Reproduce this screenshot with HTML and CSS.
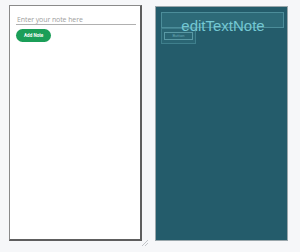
FILE: index.html
```html
<!DOCTYPE html>
<html>
<head>
<meta charset="utf-8">
<link rel="stylesheet" href="styles.css">
</head>
<body>
<div class="stage">
  <div class="design">
    <div class="edit">Enter your note here</div>
    <div class="btn">Add Note</div>
  </div>
  <div class="blueprint">
    <div class="bp-edit"><span class="bp-label">editTextNote</span></div>
    <div class="bp-btn"><div class="bp-btn-inner">Button</div></div>
  </div>
  <div class="grip">
    <svg width="8" height="8" viewBox="0 0 8 8"><path d="M7 1L1 7M7 4L4 7" stroke="#b5b8bd" stroke-width="0.8" fill="none"/></svg>
  </div>
</div>
</body>
</html>
```
FILE: styles.css
```css
html, body { margin: 0; padding: 0; }
body {
  width: 300px; height: 252px; overflow: hidden;
  background: #f6f7f9;
  font-family: "Roboto", "Liberation Sans", sans-serif;
}
.stage {
  position: relative;
  display: flex;
  gap: 13px;
  padding: 5px 0 0 9px;
}
.design {
  box-sizing: border-box;
  width: 133px; height: 236px;
  background: #fff;
  border: 1px solid #8a8a8a;
  border-right: 2px solid #5e5e5e;
  border-bottom: 2px solid #5e5e5e;
  padding: 10px 6px 0 6px;
  display: flex; flex-direction: column; align-items: flex-start;
}
.edit {
  width: 119px;
  font-family: "Open Sans", "Roboto", sans-serif;
  font-size: 7px;
  letter-spacing: -0.1px;
  color: #a0a0a0;
  padding: 0 0 0 1px;
  border-bottom: 1px solid #b0b0b0;
  line-height: 8px;
}
.btn {
  margin-top: 4px;
  background: #1b9e58;
  color: #fff;
  font-size: 4.6px;
  font-weight: bold;
  height: 13px; line-height: 13px;
  padding: 0 8px;
  border-radius: 6.5px;
}
.blueprint {
  box-sizing: border-box;
  margin-top: 1px;
  width: 133px; height: 235px;
  background: #245c6b;
  border: 1px solid #9aa7ac;
  padding: 5px 0 0 5px;
  display: flex; flex-direction: column; align-items: flex-start;
}
.bp-edit {
  box-sizing: border-box;
  width: 123px; height: 16px;
  border: 1px solid #4c8d9a;
  background: #2d6a78;
  display: flex; justify-content: center;
  position: relative;
}
.bp-label {
  color: #74c8d3;
  font-family: "Liberation Sans", Arial, sans-serif;
  font-size: 15px;
  line-height: 15px;
  margin-top: 5px;
  margin-left: 1px;
  position: relative;
  z-index: 1;
}
.bp-btn {
  box-sizing: border-box;
  width: 35px; height: 16px;
  border: 1px solid #3f7f8c;
  background: #2a6573;
  padding: 3px 2px;
}
.bp-btn-inner {
  box-sizing: border-box;
  height: 8px;
  border: 1px solid #5a99a5;
  color: #6aa8b3;
  font-size: 4px;
  line-height: 6px;
  text-align: center;
}
.grip {
  position: absolute;
  left: 141px; top: 239px;
  width: 8px; height: 8px;
}
.grip svg { display: block; }
```
